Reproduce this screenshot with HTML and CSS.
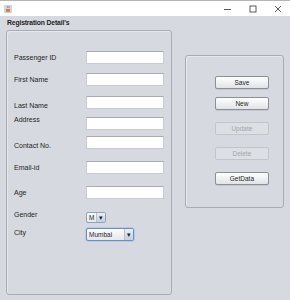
FILE: index.html
```html
<!DOCTYPE html>
<html lang="en">
<head>
  <meta charset="UTF-8" />
  <title>Registration</title>
  <link rel="stylesheet" href="styles.css">
</head>
<body>

<div id="frame">
  <div id="titleBar">
    <svg class="appIcon" width="8" height="8" viewBox="0 0 8 8">
      <rect x="0" y="0" width="8" height="8" fill="#c9d6e6"/>
      <path d="M2 4h4v2.5q-2 1.2-4 0z" fill="#e07b2a"/>
      <path d="M3.5 1q1 1 0 2M5 1.2q.8.8 0 1.6" stroke="#d04a20" stroke-width=".7" fill="none"/>
    </svg>
    <div class="winBtns">
      <svg width="8" height="8" viewBox="0 0 8 8"><path d="M0 4.5h7" stroke="#333" stroke-width=".8"/></svg>
      <svg width="8" height="8" viewBox="0 0 8 8"><rect x="1" y="1" width="6" height="6" fill="none" stroke="#333" stroke-width=".8"/></svg>
      <svg width="8" height="8" viewBox="0 0 8 8"><path d="M1 1l6 6M7 1l-6 6" stroke="#333" stroke-width=".8"/></svg>
    </div>
  </div>

  <div id="content">
    <div class="heading">Registration Detail's</div>
    <div class="columns">
      <!-- form -->
      <div class="panel formPanel">
        <div class="form">
          <label>Passenger ID</label><input type="text">
          <label>First Name</label><input type="text">
          <label class="lo">Last Name</label><input type="text">
          <label class="hi">Address</label><input type="text">
          <label class="lo">Contact No.</label><input type="text">
          <label>Email-id</label><input type="text">
          <label>Age</label><input type="text">
          <label class="hi">Gender</label>
          <div class="combo small"><span>M</span><b class="arrow">▾</b></div>
          <label class="mid">City</label>
          <div class="combo focused"><span>Mumbai</span><b class="arrow">▾</b></div>
        </div>
      </div>

      <!-- actions -->
      <div class="panel btnPanel">
        <button>Save</button>
        <button class="tight">New</button>
        <button disabled>Update</button>
        <button disabled>Delete</button>
        <button>GetData</button>
      </div>
    </div>
  </div>
</div>

</body>
</html>
```

FILE: styles.css
```css
:root {
  --bg: #d6d9df;
  --line: #a9adb3;
  --txt: #1e1e1e;
}

html, body {
  margin: 0;
  padding: 0;
  height: 100%;
  overflow: hidden;
  background: var(--bg);
  font-family: 'Liberation Sans', Arial, sans-serif;
  font-size: 7px;
  color: var(--txt);
}

#frame {
  width: 290px;
  height: 300px;
}

#titleBar {
  height: 15px;
  background: #fff;
  border-top: 1px solid #b5b5b5;
  display: flex;
  align-items: center;
  justify-content: space-between;
  padding: 0 8px 0 4px;
}

.appIcon {
  margin-top: 1px;
}

.winBtns {
  display: flex;
  gap: 17px;
  margin-top: 1px;
}

#content {
  padding: 0 6px;
}

.heading {
  font-weight: bold;
  font-size: 6.8px;
  letter-spacing: -0.15px;
  height: 14px;
  line-height: 14px;
  padding-left: 1px;
}

.columns {
  display: flex;
  align-items: flex-start;
}

.panel {
  border: 1px solid var(--line);
  border-radius: 3px;
  box-sizing: border-box;
  box-shadow: inset 1px 1px 0 #e6e8ec;
}

.formPanel {
  width: 168px;
  height: 265px;
  padding: 20px 0 0 7px;
}

.form {
  display: grid;
  grid-template-columns: 72px 78px;
  grid-template-rows: 22px 23px 21px 19px 25px 25px 26px 16px 14px;
}

.form label {
  line-height: 9px;
  margin-top: 2px;
  align-self: start;
}

.form label.lo  { margin-top: 5px; }
.form label.hi  { margin-top: -2px; }
.form label.mid { margin-top: 0; }

.form input {
  box-sizing: border-box;
  width: 78px;
  height: 13px;
  margin: 0;
  padding: 0;
  background: #fff;
  border: 1px solid #c9ccd1;
  border-top-color: #a8abb0;
  outline: none;
}

.combo {
  box-sizing: border-box;
  width: 48px;
  height: 13px;
  display: flex;
  align-items: stretch;
  border: 1px solid #8ea2bd;
  border-radius: 2px;
  background: linear-gradient(#fdfdfd, #e4e7ec);
  font-size: 6.5px;
}

.combo span {
  flex: 1;
  line-height: 11px;
  padding-left: 2px;
}

.combo .arrow {
  width: 8px;
  font-weight: normal;
  font-size: 7px;
  line-height: 11px;
  text-align: center;
  border-left: 1px solid #b4c2d4;
  background: linear-gradient(#e9eef5, #c3cfdf);
}

.combo.small {
  width: 20px;
  height: 11px;
}

.combo.small span,
.combo.small .arrow {
  line-height: 9px;
}

.combo.focused {
  border-color: #6d8fbd;
  box-shadow: 0 0 0 1px #b7cbe6;
}

.btnPanel {
  width: 100px;
  height: 153px;
  margin: 25px 0 0 13px;
  padding: 20px 0 0 29px;
  display: flex;
  flex-direction: column;
  gap: 12px;
}

.btnPanel button {
  box-sizing: border-box;
  width: 54px;
  height: 13px;
  padding: 0;
  font-family: inherit;
  font-size: 6.5px;
  color: var(--txt);
  background: linear-gradient(#ffffff, #e1e3e7);
  border: 1px solid #8b9097;
  border-radius: 2px;
  box-shadow: 0 1px 0 #c4c7cc;
}

.btnPanel button.tight {
  margin-top: -4px;
}

.btnPanel button:disabled {
  color: #a2a6ad;
  background: #dcdfe4;
  border-color: #c2c5ca;
  box-shadow: none;
}
```
